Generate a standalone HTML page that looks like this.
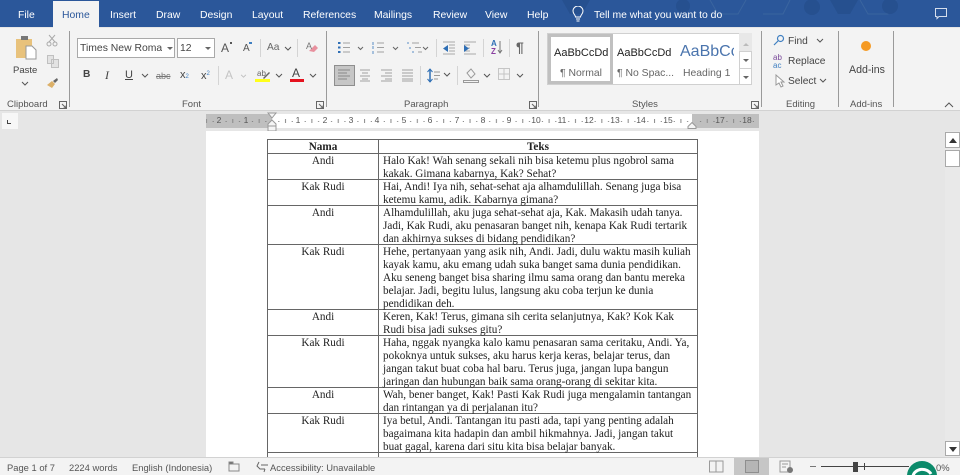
<!DOCTYPE html>
<html><head><meta charset="utf-8">
<style>
*{box-sizing:border-box}
html,body{margin:0;padding:0;width:960px;height:475px;overflow:hidden;background:#e6e6e6;font-family:"Liberation Sans",sans-serif}
.a{position:absolute;white-space:nowrap}
.t{position:absolute;white-space:nowrap;color:#fff;font-size:10.4px;line-height:14px;top:9px}
.r{position:absolute;white-space:nowrap;color:#444;font-size:10.2px;line-height:14px}
.g{position:absolute;white-space:nowrap;color:#555;font-size:9.5px;line-height:14px;top:98px}
.sep{position:absolute;top:31px;width:1px;height:76px;background:#9a9a9a}
.s2{position:absolute;width:1px;background:#d4d4d4}
.d{position:absolute;white-space:nowrap;font-family:"Liberation Serif",serif;font-size:11.2px;line-height:13px;color:#222;transform:translateY(1px)}
.c{position:absolute;white-space:nowrap;font-family:"Liberation Serif",serif;font-size:11.2px;line-height:13px;color:#222;left:268px;width:110px;text-align:center;transform:translateY(1px)}
.hl{position:absolute;left:267px;width:431px;height:1px;background:#666}
.ic{position:absolute}
.rn{position:absolute;top:114px;font-size:8.5px;line-height:12px;color:#555;white-space:nowrap;transform:translateX(-50%)}
.st{position:absolute;top:461px;font-size:9.4px;line-height:13px;color:#555;white-space:nowrap}
</style></head><body>
<!-- title -->
<div class="a" style="left:0;top:0;width:960px;height:27px;background:#2b579a"></div>
<svg class="ic" style="left:560px;top:0" width="400" height="27" viewBox="0 0 400 27" fill="none" stroke="#3a659f"><circle cx="123" cy="6" r="7" fill="#26508f" stroke="none"/><path d="M30 0l-8 14h-12L2 0" fill="#26508f" stroke="none"/><path d="M150 0l8 14h20l8-14M230 0l-7 14h-20M300 0l8 14h20l8-14"/><circle cx="252" cy="7" r="8" fill="#26508f" stroke="none"/><path d="M270 0l8 14h12l8-14" fill="#26508f" stroke="none"/><circle cx="330" cy="6" r="8" fill="#26508f" stroke="none"/></svg>
<div class="a" style="left:53px;top:1px;width:46px;height:27px;background:#f3f3f3"></div>
<div class="t" style="left:18px">File</div>
<div class="t" style="left:62px;color:#2b579a">Home</div>
<div class="t" style="left:110px">Insert</div>
<div class="t" style="left:156px">Draw</div>
<div class="t" style="left:200px">Design</div>
<div class="t" style="left:252px">Layout</div>
<div class="t" style="left:303px">References</div>
<div class="t" style="left:374px">Mailings</div>
<div class="t" style="left:433px">Review</div>
<div class="t" style="left:485px">View</div>
<div class="t" style="left:527px">Help</div>
<svg class="ic" style="left:571px;top:6px" width="14" height="17" viewBox="0 0 14 17" fill="none" stroke="#fff"><path d="M4.5 11c0-2-2.500-3-2.500-6a4.800 4.800 0 0 1 10 0c0 3-2.500 4-2.500 6zM5 13h4M5.500 15h3"/></svg>
<div class="t" style="left:594px">Tell me what you want to do</div>
<svg class="ic" style="left:935px;top:8px" width="12" height="12" viewBox="0 0 12 12" fill="none" stroke="#d5deec"><path d="M.5 .5h11v8H4l-2 2v-2H.5z"/></svg>
<!-- ribbon -->
<div class="a" style="left:0;top:28px;width:960px;height:83px;background:#f3f3f3;border-bottom:1px solid #d2d2d2"></div>
<div class="sep" style="left:69px"></div>
<div class="sep" style="left:326px"></div>
<div class="sep" style="left:538px"></div>
<div class="sep" style="left:761px"></div>
<div class="sep" style="left:838px"></div>
<div class="sep" style="left:893px"></div>
<!-- clipboard -->
<svg class="ic" style="left:16px;top:35px" width="22" height="25" viewBox="0 0 22 25"><rect x="0" y="4" width="16" height="19" fill="#e8c27c"/><rect x="5" y="1" width="7" height="4" fill="#777"/><path d="M10 11h6l4 4v9H10z" fill="#fff" stroke="#999"/></svg>
<div class="r" style="left:13px;top:64px;font-size:9.5px">Paste</div>
<svg class="ic" style="left:21px;top:81px" width="8" height="5" viewBox="0 0 8 5" fill="none" stroke="#555"><path d="M1 1l3 3 3-3"/></svg>
<svg class="ic" style="left:46px;top:34px" width="12" height="13" viewBox="0 0 12 13" fill="none" stroke="#aaa"><path d="M3 1l6 7M9 1L3 8"/><circle cx="3" cy="10" r="2"/><circle cx="9" cy="10" r="2"/></svg>
<svg class="ic" style="left:47px;top:55px" width="12" height="13" viewBox="0 0 12 13" fill="#e3e3e3" stroke="#c0c0c0"><path d="M.5 .5h6v8h-6zM4.500 4.500h7v8h-7z"/></svg>
<svg class="ic" style="left:46px;top:76px" width="13" height="13" viewBox="0 0 13 13"><path d="M1 9l5-4 3 3-3 4z" fill="#dcb068"/><path d="M7 5l4-3 1 2-3 3z" fill="#666"/></svg>
<div class="g" style="left:7px">Clipboard</div>
<svg class="ic" style="left:59px;top:101px" width="8" height="8" viewBox="0 0 8 8" fill="none" stroke="#666"><path d="M.5 .5h7v7h-7zM3 3l4 4M7 4.500V7H4.500"/></svg>
<!-- font -->
<div class="a" style="left:77px;top:38px;width:98px;height:20px;background:#fff;border:1px solid #a9a9a9"></div>
<div class="a" style="left:80px;top:42px;width:82px;overflow:hidden;color:#444;font-size:10.4px;line-height:14px">Times New Roman</div>
<div class="a" style="left:167px;top:47px;width:0;height:0;border:3px solid transparent;border-top:3px solid #666"></div>
<div class="a" style="left:177px;top:38px;width:38px;height:20px;background:#fff;border:1px solid #a9a9a9"></div>
<div class="a" style="left:180px;top:42px;color:#444;font-size:10.4px;line-height:14px">12</div>
<div class="a" style="left:205px;top:47px;width:0;height:0;border:3px solid transparent;border-top:3px solid #666"></div>
<div class="r" style="left:221px;top:41px;font-size:12px;color:#555">A</div>
<div class="r" style="left:243px;top:42px;font-size:10px;color:#555">A</div>
<div class="a" style="left:230px;top:42px;width:2px;height:2px;background:#555"></div>
<div class="a" style="left:249px;top:42px;width:3px;height:2px;background:#3f7fc1"></div>
<div class="s2" style="left:260px;top:39px;height:18px"></div>
<div class="r" style="left:267px;top:41px;color:#666">Aa</div>
<svg class="ic" style="left:284px;top:46px" width="8" height="5" viewBox="0 0 8 5" fill="none" stroke="#555"><path d="M1 1l3 3 3-3"/></svg>
<div class="s2" style="left:297px;top:39px;height:18px"></div>
<svg class="ic" style="left:305px;top:41px" width="13" height="13" viewBox="0 0 13 13"><path d="M4 10l6-6 3 3-4 4z" fill="#e8909e"/></svg>
<div class="r" style="left:306px;top:39px;font-size:9px;color:#777">A</div>
<div class="r" style="left:83px;top:68px;font-weight:bold;color:#444">B</div>
<div class="r" style="left:105px;top:68px;font-style:italic;color:#444;font-family:'Liberation Serif',serif;font-size:12px">I</div>
<div class="r" style="left:125px;top:68px;text-decoration:underline;color:#444;font-size:11px">U</div>
<svg class="ic" style="left:141px;top:73px" width="8" height="5" viewBox="0 0 8 5" fill="none" stroke="#555"><path d="M1 1l3 3 3-3"/></svg>
<div class="r" style="left:156px;top:69px;font-size:9px;color:#777;text-decoration:line-through">abc</div>
<div class="r" style="left:180px;top:68px;font-size:11px">x<span style="font-size:6px;color:#3f7fc1">2</span></div>
<div class="r" style="left:201px;top:67px;font-size:11px">x<span style="font-size:6px;vertical-align:4px;color:#3f7fc1">2</span></div>
<div class="s2" style="left:218px;top:66px;height:19px"></div>
<div class="r" style="left:225px;top:68px;font-size:12px;color:#c4c4c4">A</div>
<svg class="ic" style="left:240px;top:74px" width="7" height="4" viewBox="0 0 8 5" fill="none" stroke="#bbb"><path d="M1 1l3 3 3-3"/></svg>
<div class="r" style="left:257px;top:67px;font-size:8px;color:#666">ab</div>
<svg class="ic" style="left:256px;top:70px" width="16" height="9" viewBox="0 0 16 9"><path d="M7 8l6-6 1 1-6 6z" fill="#666"/></svg>
<div class="a" style="left:255px;top:79px;width:15px;height:3px;background:#ffff1a"></div>
<svg class="ic" style="left:275px;top:73px" width="8" height="5" viewBox="0 0 8 5" fill="none" stroke="#555"><path d="M1 1l3 3 3-3"/></svg>
<div class="r" style="left:292px;top:66px;font-size:12px">A</div>
<div class="a" style="left:290px;top:79px;width:14px;height:3px;background:#e5121e"></div>
<svg class="ic" style="left:309px;top:73px" width="8" height="5" viewBox="0 0 8 5" fill="none" stroke="#555"><path d="M1 1l3 3 3-3"/></svg>
<div class="g" style="left:182px">Font</div>
<svg class="ic" style="left:316px;top:101px" width="8" height="8" viewBox="0 0 8 8" fill="none" stroke="#666"><path d="M.5 .5h7v7h-7zM3 3l4 4M7 4.500V7H4.500"/></svg>
<!-- paragraph -->
<svg class="ic" style="left:338px;top:40px" width="190" height="16" viewBox="0 0 190 16" fill="none" stroke="#a0a0a0">
<path d="M5 3h7M5 7.500h7M5 12h7M39 3h7M39 7.500h7M39 12h7M74 3h7M77 7.500h6M80 12h4"/>
<path d="M0 3h2.500M0 7.500h2.500M0 12h2.500" stroke="#2f6fb5" stroke-width="2"/>
<path d="M35 2v3M35 6v3M35 11v3" stroke="#5a8cc4"/>
<path d="M70 2v2M72 7v2M75 11v2" stroke="#5a8cc4"/>
<path d="M20 7l2.500 2.500L25 7M55 7l2.500 2.500L60 7M85 7l2.500 2.500L90 7" stroke="#666"/>
<path d="M105 2h12M111 5h6M111 8h6M111 11h6M105 14h12M126 2h12M126 5h6M126 8h6M126 11h6M126 14h12" stroke="#aaa"/>
</svg>
<svg class="ic" style="left:443px;top:43px" width="30" height="11" viewBox="0 0 30 11"><path d="M5 2L0 5.500 5 9z" fill="#2f6fb5"/><path d="M21 2l5 3.500L21 9z" fill="#2f6fb5"/></svg>
<div class="s2" style="left:436px;top:39px;height:18px"></div>
<div class="s2" style="left:483px;top:39px;height:18px"></div>
<div class="a" style="left:491px;top:39px;font-size:8px;line-height:9px;font-weight:bold;color:#2f6fb5">A</div>
<div class="a" style="left:491px;top:47px;font-size:8px;line-height:9px;font-weight:bold;color:#8a3fa0">Z</div>
<svg class="ic" style="left:497px;top:40px" width="6" height="15" viewBox="0 0 6 15" fill="none" stroke="#777"><path d="M3 1v12M1 10l2 3 2-3"/></svg>
<div class="s2" style="left:509px;top:39px;height:18px"></div>
<div class="r" style="left:516px;top:39px;font-size:14px;line-height:17px;color:#666;font-weight:bold">¶</div>
<div class="a" style="left:334px;top:65px;width:21px;height:21px;background:#c6c6c6;border:1px solid #8e8e8e"></div>
<svg class="ic" style="left:338px;top:69px" width="80" height="13" viewBox="0 0 80 13" fill="none" stroke="#a0a0a0">
<path d="M0 1h12M0 4h9M0 7h12M0 10h9" stroke="#888"/>
<path d="M22 1h10M24 4h6M22 7h10M24 10h6M22 12h10M43 1h11M47 4h7M43 7h11M47 10h7M43 12h11M64 1h11M64 4h11M64 7h11M64 10h11M64 12h11"/>
</svg>
<div class="s2" style="left:420px;top:66px;height:19px"></div>
<svg class="ic" style="left:427px;top:67px" width="26" height="17" viewBox="0 0 26 17" fill="none"><path d="M3 2v13" stroke="#2f6fb5" stroke-width="1.500"/><path d="M.5 5L3 2l2.500 3M.5 12L3 15l2.500-3" stroke="#2f6fb5"/><path d="M7 5h6M7 8.500h6M7 12h4" stroke="#999"/><path d="M17 6l3 3 3-3" stroke="#555"/></svg>
<div class="s2" style="left:457px;top:66px;height:19px"></div>
<svg class="ic" style="left:463px;top:66px" width="16" height="19" viewBox="0 0 16 19" fill="none" stroke="#999"><path d="M4 7l4-4 4 5-4 4z"/><path d="M.5 14.500h15v2H.5z"/></svg>
<svg class="ic" style="left:483px;top:73px" width="8" height="5" viewBox="0 0 8 5" fill="none" stroke="#555"><path d="M1 1l3 3 3-3"/></svg>
<svg class="ic" style="left:498px;top:68px" width="12" height="12" viewBox="0 0 12 12" fill="none" stroke="#c5c5c5"><path d="M.5 .5h11v11H.5zM6 .5v11M.5 6h11"/></svg>
<svg class="ic" style="left:516px;top:73px" width="8" height="5" viewBox="0 0 8 5" fill="none" stroke="#555"><path d="M1 1l3 3 3-3"/></svg>
<div class="g" style="left:404px">Paragraph</div>
<svg class="ic" style="left:529px;top:101px" width="8" height="8" viewBox="0 0 8 8" fill="none" stroke="#666"><path d="M.5 .5h7v7h-7zM3 3l4 4M7 4.500V7H4.500"/></svg>
<!-- styles -->
<div class="a" style="left:547px;top:33px;width:193px;height:52px;background:#fff;border:1px solid #d0d0d0"></div>
<div class="a" style="left:548px;top:34px;width:65px;height:50px;background:#fff;border:3px solid #c0c0c0"></div>
<div class="a" style="left:554px;top:46px;font-size:11px;line-height:15px;color:#222">AaBbCcDd</div>
<div class="a" style="left:560px;top:67px;font-size:10.4px;line-height:14px;color:#666">¶ Normal</div>
<div class="a" style="left:617px;top:46px;font-size:11px;line-height:15px;color:#222">AaBbCcDd</div>
<div class="a" style="left:617px;top:67px;font-size:10.4px;line-height:14px;color:#666">¶ No Spac...</div>
<div class="a" style="left:680px;top:42px;width:54px;overflow:hidden;font-size:16px;line-height:20px;color:#4a74ad">AaBbCc</div>
<div class="a" style="left:683px;top:67px;font-size:10.4px;line-height:14px;color:#666">Heading 1</div>
<div class="a" style="left:739px;top:33px;width:13px;height:52px;background:#fff;border:1px solid #d0d0d0"></div>
<div class="a" style="left:739px;top:33px;width:13px;height:18px;background:#e8e8e8"></div>
<div class="a" style="left:739px;top:51px;width:13px;height:1px;background:#d0d0d0"></div>
<div class="a" style="left:739px;top:68px;width:13px;height:1px;background:#d0d0d0"></div>
<div class="a" style="left:743px;top:40px;width:0;height:0;border:3px solid transparent;border-bottom:3px solid #bbb"></div>
<div class="a" style="left:743px;top:59px;width:0;height:0;border:3px solid transparent;border-top:3px solid #666"></div>
<div class="a" style="left:743px;top:76px;width:0;height:0;border:3px solid transparent;border-top:3px solid #666"></div>
<div class="g" style="left:632px">Styles</div>
<svg class="ic" style="left:751px;top:101px" width="8" height="8" viewBox="0 0 8 8" fill="none" stroke="#666"><path d="M.5 .5h7v7h-7zM3 3l4 4M7 4.500V7H4.500"/></svg>
<!-- editing -->
<svg class="ic" style="left:773px;top:34px" width="12" height="12" viewBox="0 0 12 12" fill="none" stroke="#3f7fc1" stroke-width="1.200"><circle cx="7.500" cy="4.500" r="3"/><path d="M5 7l-4 4"/></svg>
<div class="r" style="left:788px;top:35px">Find</div>
<svg class="ic" style="left:816px;top:38px" width="8" height="5" viewBox="0 0 8 5" fill="none" stroke="#555"><path d="M1 1l3 3 3-3"/></svg>
<div class="a" style="left:773px;top:54px;font-size:8px;line-height:8px;color:#7a4a9a">ab<br><span style="color:#3f7fc1">ac</span></div>
<div class="r" style="left:788px;top:55px">Replace</div>
<svg class="ic" style="left:775px;top:74px" width="10" height="14" viewBox="0 0 10 14" fill="#fff" stroke="#999"><path d="M1 1v10l3-2 2 4 2-1-2-4h3z"/></svg>
<div class="r" style="left:788px;top:75px">Select</div>
<svg class="ic" style="left:819px;top:78px" width="8" height="5" viewBox="0 0 8 5" fill="none" stroke="#555"><path d="M1 1l3 3 3-3"/></svg>
<div class="g" style="left:786px">Editing</div>
<!-- addins -->
<div class="a" style="left:861px;top:41px;width:10px;height:10px;border-radius:50%;background:#f59a23"></div>
<div class="r" style="left:849px;top:63px;font-size:10.6px">Add-ins</div>
<div class="g" style="left:850px">Add-ins</div>
<svg class="ic" style="left:944px;top:102px" width="10" height="6" viewBox="0 0 10 6" fill="none" stroke="#555"><path d="M1 5l4-4 4 4"/></svg>
<!-- ruler row -->
<div class="a" style="left:2px;top:113px;width:16px;height:16px;background:#f7f7f7"></div>
<div class="a" style="left:7px;top:120px;width:4px;height:4px;border-left:1px solid #444;border-bottom:1px solid #444"></div>
<div class="a" style="left:206px;top:114px;width:553px;height:14px;background:#fff"></div>
<div class="a" style="left:206px;top:114px;width:66px;height:14px;background:#bfbfbf"></div>
<div class="a" style="left:692px;top:114px;width:67px;height:14px;background:#bfbfbf"></div>
<svg class="ic" style="left:206px;top:114px" width="553" height="14" viewBox="0 0 553 14">
<defs><pattern id="rt" patternUnits="userSpaceOnUse" x="13.300" y="0" width="26.360" height="14"><rect x="6.300" y="7" width="1" height="1" fill="#777"/><rect x="13" y="5" width="1" height="4" fill="#888"/><rect x="19.700" y="7" width="1" height="1" fill="#777"/></pattern></defs>
<rect width="553" height="14" fill="url(#rt)"/></svg>
<div class="rn" style="left:219px">2</div><div class="rn" style="left:246px">1</div>
<div class="rn" style="left:298px">1</div><div class="rn" style="left:325px">2</div><div class="rn" style="left:351px">3</div><div class="rn" style="left:377px">4</div><div class="rn" style="left:404px">5</div><div class="rn" style="left:430px">6</div><div class="rn" style="left:457px">7</div><div class="rn" style="left:483px">8</div><div class="rn" style="left:509px">9</div><div class="rn" style="left:536px">10</div><div class="rn" style="left:562px">11</div><div class="rn" style="left:589px">12</div><div class="rn" style="left:615px">13</div><div class="rn" style="left:641px">14</div><div class="rn" style="left:668px">15</div><div class="rn" style="left:720px">17</div><div class="rn" style="left:747px">18</div>
<svg class="ic" style="left:267px;top:112px" width="10" height="21" viewBox="0 0 10 21" fill="#f5f5f5" stroke="#999"><path d="M1 1h8L5 6zM5 8l4 4v2H1v-2zM1 14h8v5H1z"/></svg>
<svg class="ic" style="left:687px;top:122px" width="10" height="7" viewBox="0 0 10 7" fill="#f5f5f5" stroke="#999"><path d="M5 .5l4 4v2H1v-2z"/></svg>
<!-- page -->
<div class="a" style="left:206px;top:131px;width:553px;height:326px;background:#fff"></div>
<!-- table lines -->
<div class="hl" style="top:139px"></div><div class="hl" style="top:153px"></div><div class="hl" style="top:179px"></div><div class="hl" style="top:205px"></div><div class="hl" style="top:244px"></div><div class="hl" style="top:309px"></div><div class="hl" style="top:335px"></div><div class="hl" style="top:387px"></div><div class="hl" style="top:413px"></div><div class="hl" style="top:452px"></div>
<div class="a" style="left:267px;top:139px;width:1px;height:318px;background:#666"></div>
<div class="a" style="left:378px;top:139px;width:1px;height:318px;background:#666"></div>
<div class="a" style="left:697px;top:139px;width:1px;height:318px;background:#666"></div>
<div class="c" style="top:140px;left:268px;font-weight:bold">Nama</div>
<div class="d" style="top:140px;left:379px;width:318px;text-align:center;font-weight:bold">Teks</div>
<div class="c" style="top:154px">Andi</div>
<div class="d" style="left:383px;top:154px">Halo Kak! Wah senang sekali nih bisa ketemu plus ngobrol sama</div>
<div class="d" style="left:383px;top:167px">kakak. Gimana kabarnya, Kak? Sehat?</div>
<div class="c" style="top:180px">Kak Rudi</div>
<div class="d" style="left:383px;top:180px">Hai, Andi! Iya nih, sehat-sehat aja alhamdulillah. Senang juga bisa</div>
<div class="d" style="left:383px;top:193px">ketemu kamu, adik. Kabarnya gimana?</div>
<div class="c" style="top:206px">Andi</div>
<div class="d" style="left:383px;top:206px">Alhamdulillah, aku juga sehat-sehat aja, Kak. Makasih udah tanya.</div>
<div class="d" style="left:383px;top:219px">Jadi, Kak Rudi, aku penasaran banget nih, kenapa Kak Rudi tertarik</div>
<div class="d" style="left:383px;top:232px">dan akhirnya sukses di bidang pendidikan?</div>
<div class="c" style="top:245px">Kak Rudi</div>
<div class="d" style="left:383px;top:245px">Hehe, pertanyaan yang asik nih, Andi. Jadi, dulu waktu masih kuliah</div>
<div class="d" style="left:383px;top:258px">kayak kamu, aku emang udah suka banget sama dunia pendidikan.</div>
<div class="d" style="left:383px;top:271px">Aku seneng banget bisa sharing ilmu sama orang dan bantu mereka</div>
<div class="d" style="left:383px;top:284px">belajar. Jadi, begitu lulus, langsung aku coba terjun ke dunia</div>
<div class="d" style="left:383px;top:297px">pendidikan deh.</div>
<div class="c" style="top:310px">Andi</div>
<div class="d" style="left:383px;top:310px">Keren, Kak! Terus, gimana sih cerita selanjutnya, Kak? Kok Kak</div>
<div class="d" style="left:383px;top:323px">Rudi bisa jadi sukses gitu?</div>
<div class="c" style="top:336px">Kak Rudi</div>
<div class="d" style="left:383px;top:336px">Haha, nggak nyangka kalo kamu penasaran sama ceritaku, Andi. Ya,</div>
<div class="d" style="left:383px;top:349px">pokoknya untuk sukses, aku harus kerja keras, belajar terus, dan</div>
<div class="d" style="left:383px;top:362px">jangan takut buat coba hal baru. Terus juga, jangan lupa bangun</div>
<div class="d" style="left:383px;top:375px">jaringan dan hubungan baik sama orang-orang di sekitar kita.</div>
<div class="c" style="top:388px">Andi</div>
<div class="d" style="left:383px;top:388px">Wah, bener banget, Kak! Pasti Kak Rudi juga mengalamin tantangan</div>
<div class="d" style="left:383px;top:401px">dan rintangan ya di perjalanan itu?</div>
<div class="c" style="top:414px">Kak Rudi</div>
<div class="d" style="left:383px;top:414px">Iya betul, Andi. Tantangan itu pasti ada, tapi yang penting adalah</div>
<div class="d" style="left:383px;top:427px">bagaimana kita hadapin dan ambil hikmahnya. Jadi, jangan takut</div>
<div class="d" style="left:383px;top:440px">buat gagal, karena dari situ kita bisa belajar banyak.</div>
<!-- scrollbar -->
<div class="a" style="left:945px;top:131px;width:15px;height:326px;background:#e9e9e9"></div>
<div class="a" style="left:945px;top:132px;width:15px;height:16px;background:#fff;border:1px solid #a9a9a9"></div>
<div class="a" style="left:949px;top:134px;width:0;height:0;border:4px solid transparent;border-bottom:5px solid #333"></div>
<div class="a" style="left:945px;top:150px;width:15px;height:17px;background:#fff;border:1px solid #a9a9a9"></div>
<div class="a" style="left:945px;top:441px;width:15px;height:15px;background:#fff;border:1px solid #a9a9a9"></div>
<div class="a" style="left:949px;top:447px;width:0;height:0;border:4px solid transparent;border-top:5px solid #333"></div>
<!-- status -->
<div class="a" style="left:0;top:457px;width:960px;height:18px;background:#f3f3f3;border-top:1px solid #d2d2d2"></div>
<div class="st" style="left:7px">Page 1 of 7</div>
<div class="st" style="left:69px">2224 words</div>
<div class="st" style="left:132px">English (Indonesia)</div>
<svg class="ic" style="left:228px;top:461px" width="12" height="11" viewBox="0 0 12 11" fill="none" stroke="#888"><path d="M1 3h10v7H1z"/><path d="M1 1h4v2H1z" fill="#666"/></svg>
<svg class="ic" style="left:256px;top:461px" width="13" height="12" viewBox="0 0 13 12" fill="none" stroke="#666"><path d="M3 1l-2 4 3 3h5M5 4h7M9 8l-1 3"/></svg>
<div class="st" style="left:270px">Accessibility: Unavailable</div>
<svg class="ic" style="left:709px;top:460px" width="15" height="13" viewBox="0 0 15 13" fill="#f3f3f3" stroke="#9a9a9a"><path d="M.5 1h6.500v11H.5zM7 1h7v11H7z"/></svg>
<div class="a" style="left:734px;top:458px;width:35px;height:17px;background:#c6c6c6"></div>
<div class="a" style="left:745px;top:460px;width:14px;height:13px;background:#b5b5b5;border:1px solid #8e8e8e"></div>
<svg class="ic" style="left:779px;top:460px" width="15" height="14" viewBox="0 0 15 14" fill="#f3f3f3" stroke="#9a9a9a"><path d="M1 1h10v11H1zM3 4h6M3 7h4"/><circle cx="11" cy="10" r="3" fill="#777" stroke="none"/></svg>
<div class="a" style="left:810px;top:466px;width:6px;height:1px;background:#777"></div>
<div class="a" style="left:821px;top:466px;width:88px;height:1px;background:#444"></div>
<div class="a" style="left:864px;top:463px;width:1px;height:7px;background:#444"></div>
<div class="a" style="left:853px;top:462px;width:5px;height:10px;background:#444"></div>
<div class="st" style="left:936px;color:#555">0%</div>
<svg class="ic" style="left:907px;top:461px" width="30" height="14" viewBox="0 0 30 14"><circle cx="15" cy="15" r="15" fill="#0b8a6a"/><path d="M24 13a9.500 8 0 0 0-18 2" fill="none" stroke="#fff" stroke-width="3"/></svg>
</body></html>
